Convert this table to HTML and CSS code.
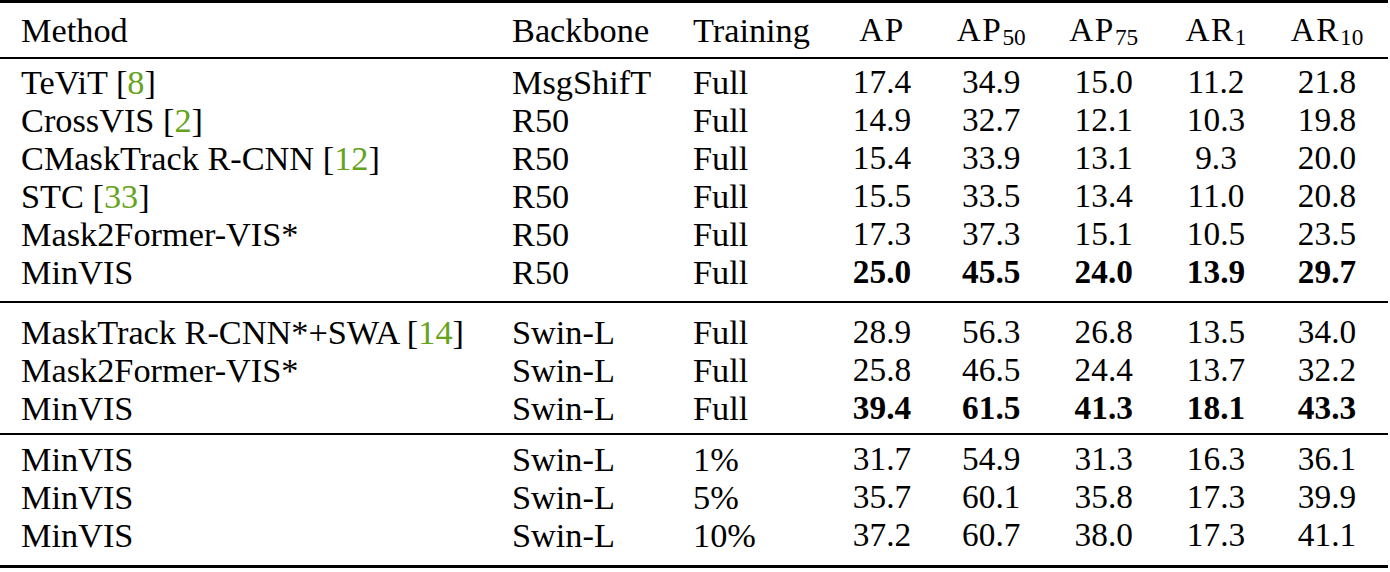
FILE: index.html
```html
<!DOCTYPE html>
<html>
<head>
<meta charset="utf-8">
<link rel="stylesheet" href="styles.css">
</head>
<body>
<div class="table">
  <div class="row head">
    <div class="txt">Method</div><div class="txt">Backbone</div><div class="txt">Training</div>
    <div class="num"><span class="lbl">AP</span></div>
    <div class="num"><span class="lbl">AP</span><span class="sub">50</span></div>
    <div class="num"><span class="lbl">AP</span><span class="sub">75</span></div>
    <div class="num"><span class="lbl">AR</span><span class="sub">1</span></div>
    <div class="num"><span class="lbl">AR</span><span class="sub">10</span></div>
  </div>
  <div class="group g1">
    <div class="row"><div class="txt">TeViT [<span class="cite">8</span>]</div><div class="txt">MsgShifT</div><div class="txt">Full</div><div class="num">17.4</div><div class="num">34.9</div><div class="num">15.0</div><div class="num">11.2</div><div class="num">21.8</div></div>
    <div class="row"><div class="txt">CrossVIS [<span class="cite">2</span>]</div><div class="txt">R50</div><div class="txt">Full</div><div class="num">14.9</div><div class="num">32.7</div><div class="num">12.1</div><div class="num">10.3</div><div class="num">19.8</div></div>
    <div class="row"><div class="txt">CMaskTrack R-CNN [<span class="cite">12</span>]</div><div class="txt">R50</div><div class="txt">Full</div><div class="num">15.4</div><div class="num">33.9</div><div class="num">13.1</div><div class="num">9.3</div><div class="num">20.0</div></div>
    <div class="row"><div class="txt">STC [<span class="cite">33</span>]</div><div class="txt">R50</div><div class="txt">Full</div><div class="num">15.5</div><div class="num">33.5</div><div class="num">13.4</div><div class="num">11.0</div><div class="num">20.8</div></div>
    <div class="row"><div class="txt">Mask2Former-VIS*</div><div class="txt">R50</div><div class="txt">Full</div><div class="num">17.3</div><div class="num">37.3</div><div class="num">15.1</div><div class="num">10.5</div><div class="num">23.5</div></div>
    <div class="row"><div class="txt">MinVIS</div><div class="txt">R50</div><div class="txt">Full</div><div class="num b">25.0</div><div class="num b">45.5</div><div class="num b">24.0</div><div class="num b">13.9</div><div class="num b">29.7</div></div>
  </div>
  <div class="group g2">
    <div class="row"><div class="txt">MaskTrack R-CNN*+SWA [<span class="cite">14</span>]</div><div class="txt">Swin-L</div><div class="txt">Full</div><div class="num">28.9</div><div class="num">56.3</div><div class="num">26.8</div><div class="num">13.5</div><div class="num">34.0</div></div>
    <div class="row"><div class="txt">Mask2Former-VIS*</div><div class="txt">Swin-L</div><div class="txt">Full</div><div class="num">25.8</div><div class="num">46.5</div><div class="num">24.4</div><div class="num">13.7</div><div class="num">32.2</div></div>
    <div class="row"><div class="txt">MinVIS</div><div class="txt">Swin-L</div><div class="txt">Full</div><div class="num b">39.4</div><div class="num b">61.5</div><div class="num b">41.3</div><div class="num b">18.1</div><div class="num b">43.3</div></div>
  </div>
  <div class="group g3">
    <div class="row"><div class="txt">MinVIS</div><div class="txt">Swin-L</div><div class="txt">1%</div><div class="num">31.7</div><div class="num">54.9</div><div class="num">31.3</div><div class="num">16.3</div><div class="num">36.1</div></div>
    <div class="row"><div class="txt">MinVIS</div><div class="txt">Swin-L</div><div class="txt">5%</div><div class="num">35.7</div><div class="num">60.1</div><div class="num">35.8</div><div class="num">17.3</div><div class="num">39.9</div></div>
    <div class="row"><div class="txt">MinVIS</div><div class="txt">Swin-L</div><div class="txt">10%</div><div class="num">37.2</div><div class="num">60.7</div><div class="num">38.0</div><div class="num">17.3</div><div class="num">41.1</div></div>
  </div>
</div>
</body>
</html>
```

FILE: styles.css
```css
html, body {
  margin: 0;
  padding: 0;
  background: #ffffff;
}

.table {
  width: 1388px;
  border-top: 3px solid #000;
  border-bottom: 3px solid #000;
  font-family: "Liberation Serif", "Times New Roman", serif;
  font-size: 33.3px;
  color: #000;
}

.row {
  display: grid;
  grid-template-columns: 491px 181px 156.5px 107px 111.5px 113.5px 111px 111px;
  height: 38px;
  line-height: 38px;
}

.txt {
  padding-left: 21px;
  white-space: nowrap;
  font-size: 34.3px;
}

.num {
  text-align: center;
  white-space: nowrap;
}

.lbl {
  letter-spacing: 1.5px;
}

.b {
  font-weight: bold;
}

.cite {
  color: #66a31c;
}

.sub {
  font-size: 0.7em;
  line-height: 0;
  vertical-align: -0.16em;
}

.head {
  padding: 8px 0;
  border-bottom: 2px solid #000;
}

.g1 {
  padding: 4px 0 10px;
  border-bottom: 2px solid #000;
}

.g2 {
  padding: 10px 0 6px;
  border-bottom: 2px solid #000;
}

.g3 {
  padding: 5px 0 11px;
}
```
